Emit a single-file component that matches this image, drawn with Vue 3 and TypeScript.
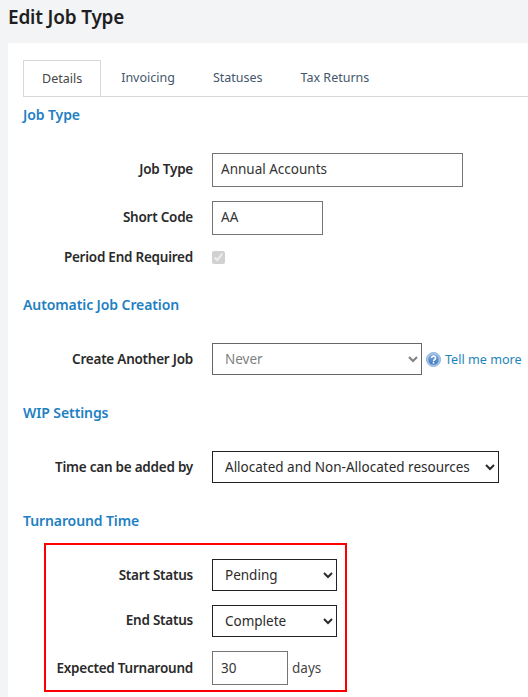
<script setup lang="ts">
const tabs = ['Details', 'Invoicing', 'Statuses', 'Tax Returns']
</script>

<template>
  <div class="page">
    <h1 class="title">Edit Job Type</h1>
    <div class="panel">
      <ul class="tabs">
        <li v-for="(t, i) in tabs" :key="t" class="tab" :class="{ active: i === 0 }">{{ t }}</li>
      </ul>

      <h2 class="section first">Job Type</h2>
      <div class="rows rows-job">
        <div class="row">
          <label class="label">Job Type</label>
          <input class="field w-251" type="text" value="Annual Accounts" />
        </div>
        <div class="row">
          <label class="label">Short Code</label>
          <input class="field w-111" type="text" value="AA" />
        </div>
        <div class="row row-check">
          <label class="label">Period End Required</label>
          <input class="check" type="checkbox" checked disabled />
        </div>
      </div>

      <h2 class="section">Automatic Job Creation</h2>
      <div class="rows">
        <div class="row">
          <label class="label">Create Another Job</label>
          <select class="field sel muted w-210" disabled><option>Never</option></select>
          <svg class="help" width="15" height="15" viewBox="0 0 15 15">
            <defs>
              <linearGradient id="helpFill" x1="0" y1="0" x2="0" y2="1">
                <stop offset="0" stop-color="#7fa9da" />
                <stop offset="1" stop-color="#3f78bd" />
              </linearGradient>
            </defs>
            <circle cx="7.5" cy="7.5" r="7" fill="#a9c8ea" stroke="#8db2dc" />
            <circle cx="7.5" cy="7.5" r="5.3" fill="url(#helpFill)" />
            <path d="M5.5 6a2 2 0 1 1 3.1 1.7c-.7.4-1.1.7-1.1 1.5" fill="none" stroke="#fff" stroke-width="1.5" />
            <rect x="6.7" y="10" width="1.6" height="1.6" fill="#fff" />
          </svg>
          <a class="link">Tell me more</a>
        </div>
      </div>

      <h2 class="section">WIP Settings</h2>
      <div class="rows">
        <div class="row">
          <label class="label">Time can be added by</label>
          <select class="field sel dark w-287"><option>Allocated and Non-Allocated resources</option></select>
        </div>
      </div>

      <h2 class="section">Turnaround Time</h2>
      <div class="highlight">
        <div class="row">
          <label class="label">Start Status</label>
          <select class="field sel dark w-125"><option>Pending</option></select>
        </div>
        <div class="row">
          <label class="label end-label">End Status</label>
          <select class="field sel dark w-125"><option>Complete</option></select>
        </div>
        <div class="row">
          <label class="label">Expected Turnaround</label>
          <input class="field w-76" type="text" value="30" />
          <span class="unit">days</span>
        </div>
      </div>
    </div>
  </div>
</template>

<style>
html, body { margin: 0; background: #f3f4f6; }
</style>

<style scoped>
.page {
  width: 528px;
  height: 697px;
  overflow: hidden;
  background: #f3f4f6;
  font-family: "Noto Sans", "Open Sans", sans-serif;
  color: #252525;
  font-size: 14px;
}
.title {
  margin: 0;
  height: 43px;
  padding: 1px 0 0 8px;
  box-sizing: border-box;
  font-size: 19px;
  letter-spacing: -0.2px;
  line-height: 32px;
  font-weight: 600;
  color: #1f1f1f;
}
.panel {
  margin-left: 8px;
  background: #fff;
  padding: 17px 0 0 15px;
  height: 654px;
  box-sizing: border-box;
}
.tabs {
  display: flex;
  list-style: none;
  margin: 0;
  padding: 0;
  height: 37px;
  box-sizing: border-box;
  border-bottom: 1px solid #d8d8d8;
}
.tab {
  padding: 0 19px;
  line-height: 35px;
  font-size: 12.5px;
  color: #44566c;
}
.tab.active {
  height: 36px;
  padding: 0 18px;
  margin-right: 1px;
  box-sizing: border-box;
  border: 1px solid #d8d8d8;
  border-bottom: 0;
  background: #fff;
  color: #474747;
}
.section {
  margin: 0;
  padding-top: 28px;
  font-size: 14px;
  letter-spacing: -0.1px;
  line-height: 20px;
  font-weight: 600;
  color: #1e7fc2;
}
.section.first { padding-top: 8px; }
.rows { margin-left: -15px; padding-top: 28px; }
.rows-job { padding-bottom: 2px; }
.row {
  display: flex;
  align-items: center;
}
.label {
  width: 185px;
  margin-right: 19px;
  text-align: right;
  font-size: 13.5px;
  letter-spacing: -0.24px;
  font-weight: 600;
  color: #2a2a2a;
  white-space: nowrap;
  flex: none;
}
.rows-job .label { padding-bottom: 2px; }
.rows-job .row-check .label { padding-bottom: 0; }
.end-label { padding-bottom: 2px; }
.field {
  box-sizing: border-box;
  height: 34px;
  padding: 0 8px;
  border: 1px solid #757575;
  border-radius: 0;
  background: #fff;
  font: 13.5px "Noto Sans", "Open Sans", sans-serif;
  color: #333;
  flex: none;
  outline: none;
}
.rows-job .field { padding-bottom: 2px; }
.w-251 { width: 251px; }
.w-111 { width: 111px; }
.w-210 { width: 210px; }
.w-287 { width: 287px; }
.w-125 { width: 125px; }
.w-76 { width: 76px; }
.sel { height: 32px; }
.sel.dark { border-color: #222; color: #2b2b2b; }
.sel.muted { border-color: #666; color: #808080; opacity: 1; }
.check { margin: 0; width: 13px; height: 13px; }
.help { margin-left: 4px; flex: none; }
.link { margin-left: 4px; color: #1e84b8; font-size: 12.6px; white-space: nowrap; }
.unit { margin-left: 4px; font-size: 13.5px; color: #444; }
.highlight {
  margin: 12px 0 0 21px;
  width: 303px;
  height: 149px;
  box-sizing: border-box;
  border: 2px solid #f00;
  padding: 14px 0 0;
}
.highlight .label { width: 147px; margin-right: 19px; }
.highlight .row + .row { margin-top: 14px; }
.rows-job .row + .row { margin-top: 14px; }
.rows-job .row-check { height: 16px; }
</style>
